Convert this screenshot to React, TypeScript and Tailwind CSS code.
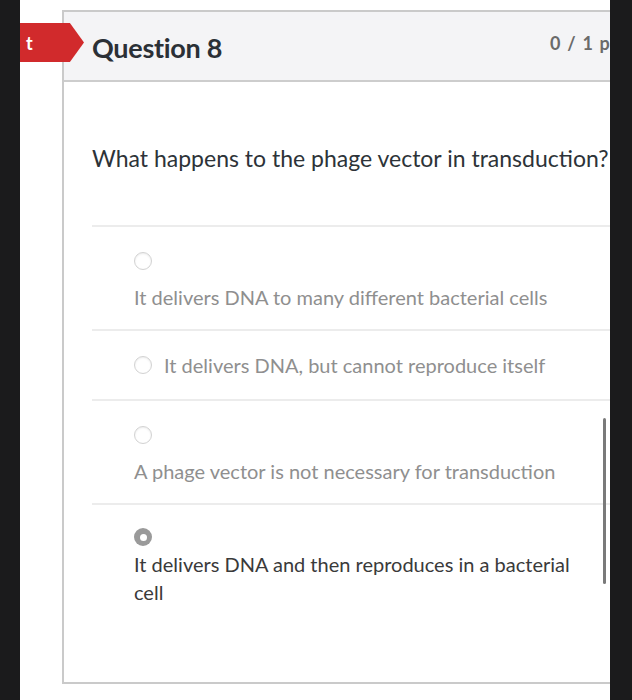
import React from "react";

function Radio({ selected = false }: { selected?: boolean }) {
  if (selected) {
    return (
      <div className="w-[18px] h-[18px] rounded-full bg-[#9a9a9a] flex items-center justify-center shrink-0">
        <div className="w-[7px] h-[7px] rounded-full bg-white" />
      </div>
    );
  }
  return (
    <div className="w-[18px] h-[18px] rounded-full border border-[#d2d2d2] bg-white shadow-[inset_0_1px_2px_rgba(0,0,0,0.08)] shrink-0" />
  );
}

export default function App() {
  return (
    <div
      className="w-[632px] h-[700px] flex bg-white overflow-hidden"
      style={{ fontFamily: "Lato, 'Open Sans', sans-serif" }}
    >
      <div className="w-[20px] h-full bg-[#1b1b1c] shrink-0" />
      <div className="flex-1 h-full relative overflow-hidden bg-white">
        <div className="ml-[42px] mt-[10px] w-[600px] h-[674px] border-2 border-[#cacaca] bg-white flex flex-col">
          <div className="h-[70px] shrink-0 bg-[#f4f4f6] border-b-2 border-[#cdcdcd] flex items-center pl-[28px] pr-[30px]">
            <div className="text-[27px] font-bold text-[#2b3036] tracking-[-0.3px] mt-[4px]">Question 8</div>
            <div className="flex-1" />
            <div className="w-[80px] text-[18px] font-bold text-[#6a6a6a] tracking-[1.2px] mb-[6px] whitespace-nowrap">0 / 1 pts</div>
          </div>
          <div className="pl-[28px]">
            <div className="pt-[61px] text-[23px] leading-[30px] text-[#2d3338] whitespace-nowrap">
              What happens to the phage vector in transduction?
            </div>
            <div className="mt-[52px] border-t-2 border-[#ececec]">
              <div className="pl-[42px] pt-[25px] pb-[18px] border-b-2 border-[#ececec]">
                <Radio />
                <div className="mt-[13px] text-[20px] leading-[28px] text-[#8f8f8f] whitespace-nowrap">
                  It delivers DNA to many different bacterial cells
                </div>
              </div>
              <div className="pl-[42px] h-[70px] flex items-center gap-[12px] border-b-2 border-[#ececec]">
                <Radio />
                <div className="text-[20px] leading-[28px] text-[#8f8f8f] whitespace-nowrap">
                  It delivers DNA, but cannot reproduce itself
                </div>
              </div>
              <div className="pl-[42px] pt-[25px] pb-[18px] border-b-2 border-[#ececec]">
                <Radio />
                <div className="mt-[13px] text-[20px] leading-[28px] text-[#8f8f8f] whitespace-nowrap">
                  A phage vector is not necessary for transduction
                </div>
              </div>
              <div className="pl-[42px] pt-[23px]">
                <Radio selected />
                <div className="mt-[4px] w-[450px] text-[20px] leading-[28px] text-[#3a3a3a]">
                  It delivers DNA and then reproduces in a bacterial cell
                </div>
              </div>
            </div>
          </div>
        </div>

        {/* red status tag */}
        <div className="absolute left-0 top-[23px] w-[64px] h-[39px] bg-[#d12a2c] [clip-path:polygon(0_0,78%_0,100%_50%,78%_100%,0_100%)] flex items-center">
          <span className="ml-[6px] text-white font-bold text-[18px] leading-none">t</span>
        </div>

        {/* scrollbar */}
        <div className="absolute left-[583px] top-[418px] w-[3px] h-[166px] rounded-full bg-[#7a7a7a]" />
      </div>
      <div className="w-[22px] h-full bg-[#1b1b1c] shrink-0" />
    </div>
  );
}
